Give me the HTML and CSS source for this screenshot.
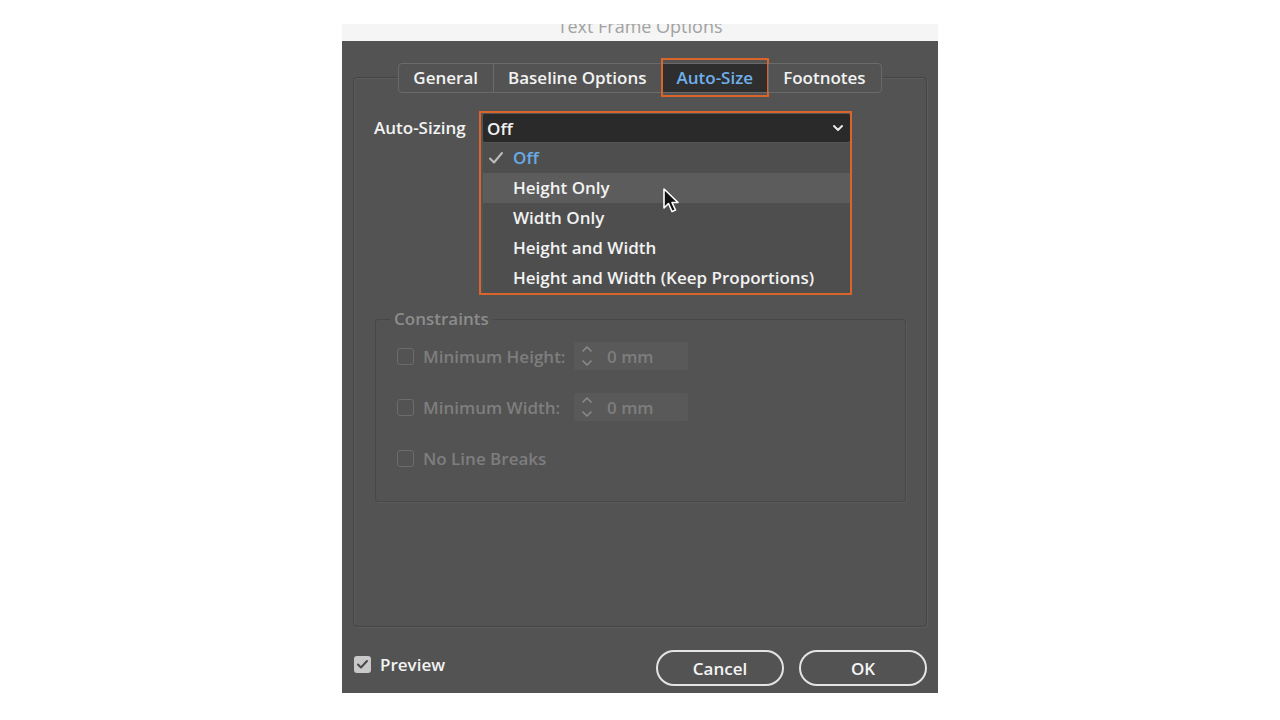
FILE: index.html
```html
<!DOCTYPE html>
<html lang="en">
<head>
    <meta charset="UTF-8">
    <meta name="viewport" content="width=device-width, initial-scale=1.0">
    <title>Text Frame Options</title>
    <link rel="stylesheet" href="styles.css">
</head>
<body>
    <div class="window">
        <div class="titlebar"><span class="title">Text Frame Options</span></div>
        <div class="dialog">
            <div class="panel">
                <div class="tabs">
                    <div class="tab">General</div>
                    <div class="tab">Baseline Options</div>
                    <div class="tab active">Auto-Size<span class="ring ring-tab"></span></div>
                    <div class="tab">Footnotes</div>
                </div>

                <div class="sizing-row">
                    <label class="sizing-label">Auto-Sizing</label>
                    <div class="select-wrap">
                        <div class="select">
                            <span>Off</span>
                            <svg class="chevron" width="12" height="8" viewBox="0 0 12 8"><path d="M2 2 L6 6 L10 2" fill="none" stroke="#e8e8e8" stroke-width="2" stroke-linecap="round" stroke-linejoin="round"/></svg>
                        </div>
                        <ul class="menu">
                            <li class="item checked">
                                <svg class="tick" width="16" height="14" viewBox="0 0 16 14"><path d="M2 7.5 L6 11.5 L14 2" fill="none" stroke="#bdbdbd" stroke-width="2" stroke-linecap="round" stroke-linejoin="round"/></svg>
                                Off
                            </li>
                            <li class="item hover">Height Only</li>
                            <li class="item">Width Only</li>
                            <li class="item">Height and Width</li>
                            <li class="item">Height and Width (Keep Proportions)</li>
                        </ul>
                        <span class="ring ring-select"></span>
                        <svg class="pointer" width="20" height="28" viewBox="0 0 20 28"><path d="M2 2 L2 21 L6.5 16.5 L10 24.5 L13.5 23 L10 15.5 L16 15.5 Z" fill="#111" stroke="#fff" stroke-width="1.6" stroke-linejoin="round"/></svg>
                    </div>
                </div>

                <fieldset class="constraints">
                    <legend>Constraints</legend>
                    <div class="row">
                        <span class="box"></span>
                        <span class="row-label">Minimum Height:</span>
                        <div class="spinner">
                            <svg width="14" height="24" viewBox="0 0 14 24"><path d="M3 7 L7 3 L11 7 M3 17 L7 21 L11 17" fill="none" stroke="#8a8a8a" stroke-width="1.6" stroke-linecap="round" stroke-linejoin="round"/></svg>
                            <span>0 mm</span>
                        </div>
                    </div>
                    <div class="row">
                        <span class="box"></span>
                        <span class="row-label">Minimum Width:</span>
                        <div class="spinner">
                            <svg width="14" height="24" viewBox="0 0 14 24"><path d="M3 7 L7 3 L11 7 M3 17 L7 21 L11 17" fill="none" stroke="#8a8a8a" stroke-width="1.6" stroke-linecap="round" stroke-linejoin="round"/></svg>
                            <span>0 mm</span>
                        </div>
                    </div>
                    <div class="row">
                        <span class="box"></span>
                        <span class="row-label">No Line Breaks</span>
                    </div>
                </fieldset>
            </div>

            <div class="footer">
                <label class="preview">
                    <span class="box checked">
                        <svg width="13" height="11" viewBox="0 0 13 11"><path d="M2 5.5 L5 8.5 L11 2" fill="none" stroke="#4a4a4a" stroke-width="2" stroke-linecap="round" stroke-linejoin="round"/></svg>
                    </span>
                    Preview
                </label>
                <div class="buttons">
                    <button class="btn">Cancel</button>
                    <button class="btn">OK</button>
                </div>
            </div>
        </div>
    </div>
</body>
</html>
```

FILE: styles.css
```css
body {
    margin: 0;
    background: #fff;
    font-family: "Open Sans", "DejaVu Sans", sans-serif;
    font-size: 17px;
    font-weight: 600;
    color: #f2f2f2;
}
.window {
    width: 596px;
    margin: 24px auto 0;
}
.titlebar {
    height: 17px;
    background: #f5f5f5;
    overflow: hidden;
    text-align: center;
}
.title {
    display: block;
    margin-top: -10px;
    font-size: 18px;
    font-weight: 400;
    line-height: 24px;
    color: #a2a2a2;
}
.dialog {
    height: 652px;
    background: #535353;
    padding: 0 11px 0 12px;
    box-sizing: border-box;
    overflow: hidden;
}
.panel {
    margin: 36px 0 0 -1px;
    height: 550px;
    box-sizing: border-box;
    border: 1px solid #454545;
    box-shadow: inset 1px 1px 0 #5c5c5c, 1px 1px 0 #5c5c5c;
    border-radius: 4px;
    padding: 0 20px;
}
/* segmented tab strip sits across the panel's top edge */
.tabs {
    display: flex;
    width: fit-content;
    margin: -15px auto 0;
    background: #535353;
    border: 1px solid #6a6a6a;
    border-radius: 4px;
    height: 28px;
}
.tab {
    position: relative;
    padding: 0 15px 0 14px;
    line-height: 28px;
    border-left: 1px solid #6a6a6a;
}
.tab:first-child {
    border-left: none;
}
.tab.active {
    background: #2e2e2e;
    color: #6fb0ec;
}
.ring {
    position: absolute;
    border: 2px solid #d9652b;
    pointer-events: none;
}
.ring-tab {
    left: -2px;
    right: -1px;
    top: -6px;
    bottom: -5px;
}
.sizing-row {
    display: flex;
    align-items: flex-start;
    margin-top: 21px;
}
.sizing-label {
    width: 109px;
    line-height: 28px;
}
.select-wrap {
    position: relative;
    width: 367px;
}
.select {
    height: 28px;
    background: #2a2a2a;
    display: flex;
    align-items: center;
    justify-content: space-between;
    padding: 0 6px 0 4px;
    border-radius: 2px;
}
.menu {
    position: absolute;
    top: 29px;
    left: 0;
    width: 100%;
    margin: 0;
    padding: 0;
    list-style: none;
    background: #4e4e4e;
}
.item {
    position: relative;
    height: 30px;
    line-height: 30px;
    padding-left: 30px;
}
.item.checked {
    color: #6aaae6;
}
.item.hover {
    background: #5c5c5c;
}
.tick {
    position: absolute;
    left: 5px;
    top: 8px;
}
.ring-select {
    left: -4px;
    top: -3px;
    width: 373px;
    height: 184px;
    box-sizing: border-box;
}
.pointer {
    position: absolute;
    left: 179px;
    top: 73px;
}
.constraints {
    margin: 167px 0 0 1px;
    width: 531px;
    box-sizing: border-box;
    border: 1px solid #474747;
    box-shadow: 1px 1px 0 #5b5b5b;
    border-radius: 3px;
    padding: 13px 20px 29px 21px;
    color: #7e7e7e;
}
.constraints legend {
    margin-left: -7px;
    padding: 0 4px;
    line-height: 20px;
    color: #8c8c8c;
}
.row {
    display: flex;
    align-items: center;
    height: 28px;
    margin-bottom: 23px;
}
.row:last-child {
    margin-bottom: 0;
}
.box {
    width: 17px;
    height: 17px;
    box-sizing: border-box;
    border: 1.5px solid #6c6c6c;
    border-radius: 3px;
    margin-right: 9px;
    flex: none;
}
.row-label {
    width: 151px;
}
.spinner {
    width: 114px;
    height: 28px;
    background: #595959;
    border-radius: 2px;
    display: flex;
    align-items: center;
    padding-left: 6px;
    box-sizing: border-box;
    gap: 13px;
}
.footer {
    display: flex;
    align-items: center;
    justify-content: space-between;
    margin-top: 23px;
    height: 36px;
}
.preview {
    display: flex;
    align-items: center;
    margin-top: -8px;
}
.box.checked {
    background: #c9c9c9;
    border: none;
    display: flex;
    align-items: center;
    justify-content: center;
}
.buttons {
    display: flex;
    gap: 15px;
}
.btn {
    width: 128px;
    height: 36px;
    border: 2px solid #e4e4e4;
    border-radius: 18px;
    background: transparent;
    color: #f4f4f4;
    font-family: "Open Sans", "DejaVu Sans", sans-serif;
    font-size: 17px;
    font-weight: 600;
}
```
